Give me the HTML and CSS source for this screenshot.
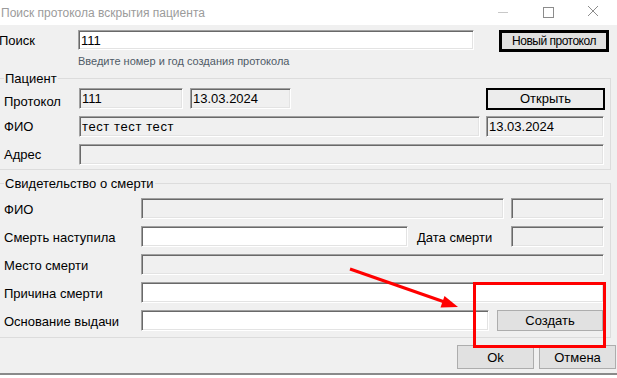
FILE: index.html
```html
<!DOCTYPE html>
<html lang="ru">
<head>
    <meta charset="UTF-8">
    <meta name="viewport" content="width=device-width, initial-scale=1.0">
    <title>Поиск протокола вскрытия пациента</title>
    <link rel="stylesheet" href="styles.css">
</head>
<body>

    <div class="window">
        <div class="titlebar">
            <span class="title">Поиск протокола вскрытия пациента</span>
            <div class="caption-buttons">
                <svg class="cap-min" width="12" height="12" viewBox="0 0 12 12"><path d="M1 6.5h10" stroke="#c8c8c8" stroke-width="1"/></svg>
                <svg class="cap-max" width="12" height="12" viewBox="0 0 12 12"><rect x="1.5" y="1.5" width="10" height="10" fill="none" stroke="#8c8c8c" stroke-width="1"/></svg>
                <svg class="cap-close" width="12" height="12" viewBox="0 0 12 12"><path d="M1 1l10 10M11 1L1 11" stroke="#8c8c8c" stroke-width="1"/></svg>
            </div>
        </div>

        <div class="client">
            <div class="row search-row">
                <span class="label search-label">Поиск</span>
                <input class="tb tb-white w-search" value="111">
                <button class="btn btn-default btn-new">Новый протокол</button>
            </div>
            <div class="hint">Введите номер и год создания протокола</div>

            <fieldset class="group group-patient">
                <legend>Пациент</legend>
                <div class="row">
                    <span class="label lbl-patient lbl-low">Протокол</span>
                    <input class="tb w-proto" value="111" readonly>
                    <input class="tb w-pdate" value="13.03.2024" readonly>
                    <button class="btn btn-open">Открыть</button>
                </div>
                <div class="row">
                    <span class="label lbl-patient">ФИО</span>
                    <input class="tb w-fio wide-text" value="тест тест тест" readonly>
                    <input class="tb w-birth" value="13.03.2024" readonly>
                </div>
                <div class="row">
                    <span class="label lbl-patient">Адрес</span>
                    <input class="tb w-addr" value="" readonly>
                </div>
            </fieldset>

            <fieldset class="group group-death">
                <legend>Свидетельство о смерти</legend>
                <div class="row">
                    <span class="label lbl-death">ФИО</span>
                    <input class="tb w-dfio" readonly>
                    <input class="tb w-small" readonly>
                </div>
                <div class="row">
                    <span class="label lbl-death">Смерть наступила</span>
                    <input class="tb tb-white w-when">
                    <span class="label lbl-date">Дата смерти</span>
                    <input class="tb w-small" readonly>
                </div>
                <div class="row">
                    <span class="label lbl-death">Место смерти</span>
                    <input class="tb w-wide" readonly>
                </div>
                <div class="row">
                    <span class="label lbl-death">Причина смерти</span>
                    <input class="tb tb-white w-wide">
                </div>
                <div class="row">
                    <span class="label lbl-death">Основание выдачи</span>
                    <input class="tb tb-white w-basis">
                    <button class="btn btn-create">Создать</button>
                </div>
            </fieldset>

            <div class="actions">
                <button class="btn btn-dialog">Ok</button>
                <button class="btn btn-dialog">Отмена</button>
            </div>
        </div>
        <div class="bottom-edge"></div>

        <!-- пометки поверх скриншота -->
        <svg class="arrow" width="617" height="378" viewBox="0 0 617 378">
            <line x1="350" y1="269" x2="446" y2="302.5" stroke="#ff0000" stroke-width="3"/>
            <polygon points="458,307 440.5,307.5 444.5,296" fill="#ff0000"/>
        </svg>
        <div class="highlight"></div>
    </div>

</body>
</html>
```

FILE: styles.css
```css
body {
    margin: 0;
    background: #fff;
    font-family: "Liberation Sans", Arial, sans-serif;
    font-size: 13px;
    color: #000;
    overflow: hidden;
}
.window {
    position: relative;
    width: 617px;
    height: 378px;
    overflow: hidden;
}
.titlebar {
    height: 25px;
    display: flex;
    align-items: center;
    background: #fff;
}
.title {
    margin-left: 1px;
    font-size: 12px;
    color: #9b9b9b;
}
.caption-buttons {
    margin-left: auto;
    display: flex;
    align-items: center;
}
.cap-min {
    margin-right: 33px;
    margin-top: -1px;
}
.cap-max {
    margin-right: 33px;
    margin-top: -2px;
}
.cap-close {
    margin-right: 18px;
    margin-top: -3px;
}
.client {
    height: 348px;
    box-sizing: border-box;
    padding-top: 5px;
    background: #f0f0f0;
}
.bottom-edge {
    height: 2px;
    background: #8a8a8a;
}
.row {
    display: flex;
    align-items: center;
    height: 21px;
}
.label {
    flex: none;
    white-space: nowrap;
}
.search-row {
    align-items: flex-start;
    height: 22px;
}
.search-label {
    width: 79px;
    margin-left: -1px;
    line-height: 21px;
}
.hint {
    margin: 3px 0 0 78px;
    font-size: 11px;
    line-height: 13px;
    color: #4f5b67;
}

/* текстовые поля в стиле Fixed3D */
.tb {
    flex: none;
    box-sizing: border-box;
    height: 21px;
    margin: 0;
    padding: 0 2px;
    border: 1px solid;
    border-color: #a0a0a0 #fff #fff #a0a0a0;
    box-shadow: inset 1px 1px 0 #696969, inset -1px -1px 0 #e3e3e3;
    background: #f0f0f0;
    font-family: "Liberation Sans", Arial, sans-serif;
    font-size: 13px;
    color: #000;
    outline: none;
}
.tb-white {
    background: #fff;
}
.wide-text {
    letter-spacing: 0.6px;
}
.w-search { width: 396px; height: 20px; }
.w-proto { width: 104px; }
.w-pdate { width: 101px; margin-left: 7px; }
.w-fio { width: 401px; }
.w-birth { width: 118px; margin-left: 6px; }
.w-addr { width: 525px; }
.w-dfio { width: 363px; }
.w-small { width: 93px; margin-left: 7px; }
.w-when { width: 267px; }
.w-wide { width: 463px; }
.w-basis { width: 348px; }

.btn {
    flex: none;
    box-sizing: border-box;
    margin: 0;
    padding: 0;
    background: #e1e1e1;
    border: 1px solid #adadad;
    font-family: "Liberation Sans", Arial, sans-serif;
    font-size: 13px;
    color: #000;
}
.btn-default {
    border: 3px solid #000;
}
.btn-new {
    width: 110px;
    height: 22px;
    margin-left: 25px;
    font-size: 12px;
    letter-spacing: -0.5px;
}
.btn-open {
    width: 119px;
    height: 22px;
    margin-left: 195px;
    border: 2px solid #000;
    background: #ececec;
}
.btn-create {
    width: 106px;
    height: 21px;
    margin-left: 8px;
}

.group {
    box-sizing: border-box;
    width: 615px;
    margin: 0 0 0 -4px;
    padding: 0 0 4px 7px;
    border: 1px solid #dcdcdc;
    display: flex;
    flex-direction: column;
    gap: 7px;
}
.group legend {
    padding: 0 1px;
    line-height: 15px;
    font-size: 13px;
}
.group-patient {
    margin-top: 3px;
    padding-top: 2px;
}
.group-death {
    margin-top: 6px;
    padding-top: 7px;
    padding-bottom: 6px;
}
.group-death .label {
    padding-top: 1px;
}
.lbl-patient { width: 75px; }
.lbl-low { padding-top: 6px; }
.lbl-death { width: 137px; }
.lbl-date {
    width: 87px;
    margin-left: 9px;
}

.actions {
    display: flex;
    gap: 5px;
    margin: 7px 0 0 457px;
}
.btn-dialog {
    width: 77px;
    height: 24px;
}

.arrow {
    position: absolute;
    left: 0;
    top: 0;
    pointer-events: none;
}
.highlight {
    position: absolute;
    left: 473px;
    top: 282px;
    width: 133px;
    height: 66px;
    box-sizing: border-box;
    border: 3px solid #ff0000;
    pointer-events: none;
}
```
